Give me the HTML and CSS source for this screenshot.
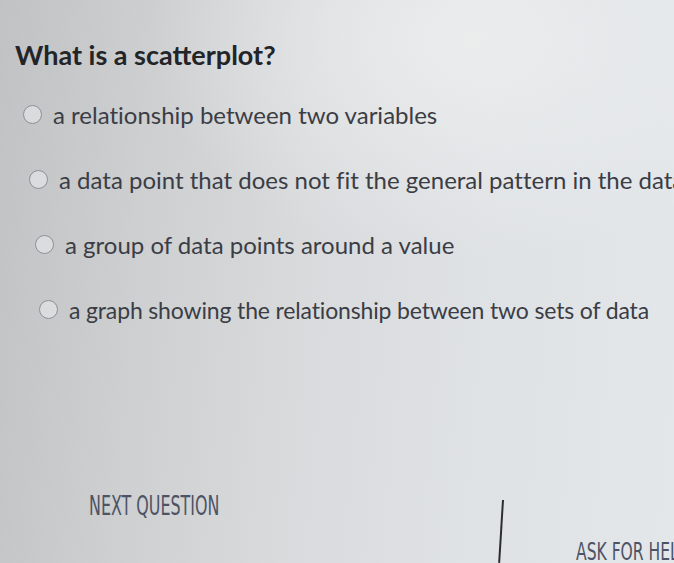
FILE: index.html
```html
<!DOCTYPE html>
<html lang="en">
<head>
<meta charset="utf-8">
<title>What is a scatterplot?</title>
<link rel="stylesheet" href="styles.css">
</head>
<body>
<div class="screen">
  <main class="quiz">
    <h1 class="question">What is a scatterplot?</h1>
    <ul class="options">
      <li class="option option-1"><span class="radio"></span><span class="label">a relationship between two variables</span></li>
      <li class="option option-2"><span class="radio"></span><span class="label">a data point that does not fit the general pattern in the data</span></li>
      <li class="option option-3"><span class="radio"></span><span class="label">a group of data points around a value</span></li>
      <li class="option option-4"><span class="radio"></span><span class="label">a graph showing the relationship between two sets of data</span></li>
    </ul>
  </main>
  <footer class="actions">
    <button class="action action-next" type="button"><span class="action-text">NEXT QUESTION</span></button>
    <div class="divider"></div>
    <button class="action action-help" type="button"><span class="action-text">ASK FOR HELP</span></button>
  </footer>
</div>
</body>
</html>
```
FILE: styles.css
```css
html, body {
  margin: 0;
  padding: 0;
}

body {
  width: 674px;
  height: 563px;
  overflow: hidden;
}

.screen {
  width: 674px;
  height: 563px;
  overflow: hidden;
  display: flex;
  flex-direction: column;
  background:
    radial-gradient(ellipse 320px 220px at 470px 40px, rgba(236, 238, 238, 0.9), rgba(236, 238, 238, 0) 100%),
    linear-gradient(95deg, #c1c2c4 0%, #cdcfd1 22%, #d8dadc 45%, #dfe2e5 70%, #e3e7ea 100%);
  font-family: Lato, "Open Sans", sans-serif;
  color: #383a42;
}

.quiz {
  padding: 40px 0 0 15px;
}

.question {
  margin: 0;
  font-family: Lato, "Open Sans", sans-serif;
  font-weight: 700;
  font-size: 27px;
  line-height: 30px;
  color: #232427;
  white-space: nowrap;
}

.options {
  list-style: none;
  margin: 12px 0 0 0;
  padding: 0;
  display: flex;
  flex-direction: column;
}

.option {
  height: 65px;
  display: flex;
  align-items: center;
  gap: 11px;
  white-space: nowrap;
}

.option-1 { margin-left: 8px; }
.option-2 { margin-left: 14px; }
.option-3 { margin-left: 20px; }
.option-4 { margin-left: 24px; }

.radio {
  flex: none;
  box-sizing: border-box;
  width: 19px;
  height: 19px;
  border: 1.5px solid #8e9095;
  border-radius: 50%;
  background: rgba(236, 237, 239, 0.55);
}

.label {
  font-size: 24px;
  line-height: 30px;
  color: #3b3d45;
  font-variant-ligatures: none;
}

.option-4 .label {
  font-size: 23px;
  letter-spacing: -0.15px;
}

.actions {
  margin-top: auto;
  height: 70px;
  display: flex;
  align-items: flex-start;
}

.action {
  flex: none;
  border: 0;
  background: none;
  padding: 0;
  margin: 0;
  font-family: "Liberation Sans Narrow", "DejaVu Sans Condensed", "DejaVu Sans", sans-serif;
  font-stretch: condensed;
  color: #4d5364;
  white-space: nowrap;
  text-align: left;
}

.action-text {
  display: inline-block;
  transform-origin: left center;
}

.action-next {
  width: 413px;
  margin: 0 0 0 89px;
  font-size: 26px;
  line-height: 26px;
}

.action-next .action-text {
  transform: scaleX(0.68);
}

.divider {
  flex: none;
  width: 2px;
  height: 63px;
  margin-top: 7px;
  background: #2c2d33;
  transform: rotate(3.5deg);
  transform-origin: top center;
}

.action-help {
  margin: 48px 0 0 72px;
  font-size: 24px;
  line-height: 22px;
}

.action-help .action-text {
  transform: scaleX(0.72);
}
```
